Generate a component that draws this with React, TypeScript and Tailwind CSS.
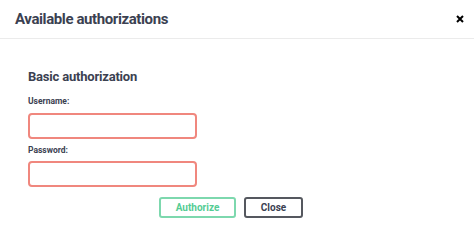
import React from 'react';

const App: React.FC = () => {
  return (
    <div className="w-[474px] h-[248px] bg-white text-[#3b4151] font-['Roboto',sans-serif] overflow-hidden">
      {/* Modal header */}
      <div className="h-[39px] flex items-center justify-between pl-[15px] pr-[10px] border-b border-[#ebebeb]">
        <h3 className="text-[15px] font-bold tracking-[-0.4px] leading-none">Available authorizations</h3>
        <button className="flex items-center justify-center">
          <svg width="8" height="8" viewBox="0 0 8 8">
            <path d="M1 1 L7 7 M7 1 L1 7" stroke="#000" strokeWidth="2" />
          </svg>
        </button>
      </div>

      {/* Auth form */}
      <div className="pl-[10px] pr-[22px] pt-[31px]">
        <div className="px-[18px]">
          <h4 className="text-[13px] font-bold tracking-[-0.2px] leading-none mb-[14px]">Basic authorization</h4>

          <label className="block text-[8.5px] font-bold leading-none mb-[7px]">Username:</label>
          <input
            type="text"
            className="block w-[169px] h-[26px] border-2 border-[#f0877e] rounded-[4px] bg-white outline-none mb-[7px]"
          />

          <label className="block text-[8.5px] font-bold leading-none mb-[7px]">Password:</label>
          <input
            type="password"
            className="block w-[169px] h-[26px] border-2 border-[#f0877e] rounded-[4px] bg-white outline-none"
          />
        </div>

        <div className="flex justify-center gap-[8px] mt-[10px]">
          <button className="w-[77px] h-[21px] border-2 border-[#7dd8ae] rounded-[3px] text-[#55cc94] text-[10px] font-bold leading-none">
            Authorize
          </button>
          <button className="w-[59px] h-[21px] border-2 border-[#55585f] rounded-[3px] text-[#3b4151] text-[10px] font-bold leading-none">
            Close
          </button>
        </div>
      </div>
    </div>
  );
};

export default App;
